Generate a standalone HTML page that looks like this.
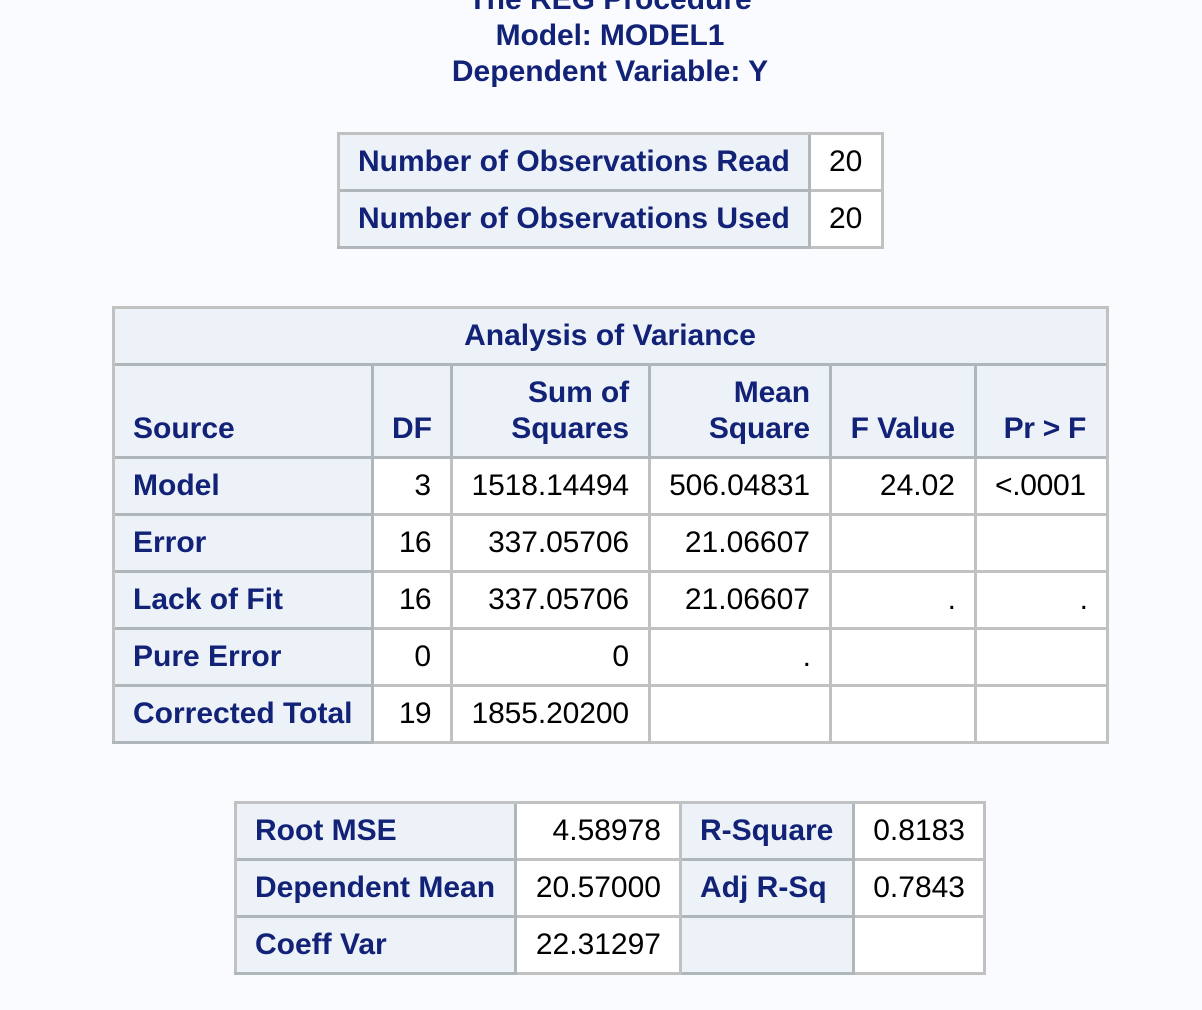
<!DOCTYPE html>
<html><head><meta charset="utf-8"><title>The REG Procedure</title>
<style>
html,body{margin:0;padding:0;width:1202px;height:1010px;overflow:hidden;background:#fafbfe}
body{position:relative;font-family:"Liberation Sans",Arial,sans-serif;font-size:30px;line-height:36px;color:#000}
.t{position:absolute;left:0;width:1220px;text-align:center;font-weight:bold;color:#112277;white-space:nowrap}
.h,.d{position:absolute;box-sizing:border-box;white-space:nowrap;padding:9px 19px 9px 18px}
.h{background:#edf2f9;color:#112277;font-weight:bold}
.d{background:#fff;text-align:right}
.r{text-align:right;letter-spacing:-.1px}.c{text-align:center}
.b{padding-top:45px}
.a,.g{position:absolute}
.a{background:#c1c1c1}
.g{background:#b0b7bb}
.l{padding-right:21px;letter-spacing:-.3px}
.e{padding-right:18px}
.n{letter-spacing:-.1px}
.p{padding-right:18px}
.s{letter-spacing:-.6px}
</style></head><body>
<div class="t" style="top:-18px">The REG Procedure</div>
<div class="t" style="top:18px;letter-spacing:-.1px">Model: MODEL1</div>
<div class="t" style="top:54px">Dependent Variable: Y</div>

<!-- table 1 -->
<div class="h" style="left:340px;top:135px;width:468px;height:54px">Number of Observations Read</div>
<div class="d" style="left:811px;top:135px;width:70px;height:54px">20</div>
<div class="h" style="left:340px;top:192px;width:468px;height:54px">Number of Observations Used</div>
<div class="d" style="left:811px;top:192px;width:70px;height:54px">20</div>
<div class="a" style="left:337px;top:132px;width:547px;height:3px"></div>
<div class="a" style="left:337px;top:132px;width:3px;height:117px"></div>
<div class="a" style="left:881px;top:132px;width:3px;height:117px"></div>
<div class="a" style="left:811px;top:189px;width:70px;height:3px"></div>
<div class="a" style="left:811px;top:246px;width:73px;height:3px"></div>
<div class="g" style="left:340px;top:189px;width:471px;height:3px"></div>
<div class="g" style="left:337px;top:246px;width:474px;height:3px"></div>
<div class="g" style="left:808px;top:135px;width:3px;height:114px"></div>

<!-- table 2 -->
<div class="h c" style="left:115px;top:309px;width:991px;height:54px">Analysis of Variance</div>
<div class="h b" style="left:115px;top:366px;width:256px;height:90px">Source</div>
<div class="h b r" style="left:374px;top:366px;width:76px;height:90px">DF</div>
<div class="h r" style="left:453px;top:366px;width:195px;height:90px">Sum of<br>Squares</div>
<div class="h r" style="left:651px;top:366px;width:178px;height:90px">Mean<br>Square</div>
<div class="h b r" style="left:832px;top:366px;width:142px;height:90px">F Value</div>
<div class="h b r" style="left:977px;top:366px;width:129px;height:90px;padding-right:20px;letter-spacing:-.3px">Pr &gt; F</div>

<div class="h" style="left:115px;top:459px;width:256px;height:54px">Model</div>
<div class="d" style="left:374px;top:459px;width:76px;height:54px">3</div>
<div class="d n" style="left:453px;top:459px;width:195px;height:54px">1518.14494</div>
<div class="d n" style="left:651px;top:459px;width:178px;height:54px">506.04831</div>
<div class="d" style="left:832px;top:459px;width:142px;height:54px">24.02</div>
<div class="d l" style="left:977px;top:459px;width:129px;height:54px">&lt;.0001</div>

<div class="h" style="left:115px;top:516px;width:256px;height:54px">Error</div>
<div class="d s" style="left:374px;top:516px;width:76px;height:54px">16</div>
<div class="d n" style="left:453px;top:516px;width:195px;height:54px">337.05706</div>
<div class="d" style="left:651px;top:516px;width:178px;height:54px">21.06607</div>
<div class="d" style="left:832px;top:516px;width:142px;height:54px"></div>
<div class="d" style="left:977px;top:516px;width:129px;height:54px"></div>

<div class="h" style="left:115px;top:573px;width:256px;height:54px">Lack of Fit</div>
<div class="d s" style="left:374px;top:573px;width:76px;height:54px">16</div>
<div class="d n" style="left:453px;top:573px;width:195px;height:54px">337.05706</div>
<div class="d" style="left:651px;top:573px;width:178px;height:54px">21.06607</div>
<div class="d p" style="left:832px;top:573px;width:142px;height:54px">.</div>
<div class="d p" style="left:977px;top:573px;width:129px;height:54px">.</div>

<div class="h" style="left:115px;top:630px;width:256px;height:54px">Pure Error</div>
<div class="d" style="left:374px;top:630px;width:76px;height:54px">0</div>
<div class="d" style="left:453px;top:630px;width:195px;height:54px">0</div>
<div class="d p" style="left:651px;top:630px;width:178px;height:54px">.</div>
<div class="d" style="left:832px;top:630px;width:142px;height:54px"></div>
<div class="d" style="left:977px;top:630px;width:129px;height:54px"></div>

<div class="h" style="left:115px;top:687px;width:256px;height:54px">Corrected Total</div>
<div class="d s" style="left:374px;top:687px;width:76px;height:54px">19</div>
<div class="d n" style="left:453px;top:687px;width:195px;height:54px">1855.20200</div>
<div class="d" style="left:651px;top:687px;width:178px;height:54px"></div>
<div class="d" style="left:832px;top:687px;width:142px;height:54px"></div>
<div class="d" style="left:977px;top:687px;width:129px;height:54px"></div>

<div class="a" style="left:112px;top:306px;width:997px;height:3px"></div>
<div class="a" style="left:112px;top:306px;width:3px;height:438px"></div>
<div class="a" style="left:1106px;top:306px;width:3px;height:438px"></div>
<div class="a" style="left:374px;top:513px;width:732px;height:3px"></div>
<div class="a" style="left:374px;top:570px;width:732px;height:3px"></div>
<div class="a" style="left:374px;top:627px;width:732px;height:3px"></div>
<div class="a" style="left:374px;top:684px;width:732px;height:3px"></div>
<div class="a" style="left:374px;top:741px;width:735px;height:3px"></div>
<div class="a" style="left:450px;top:459px;width:3px;height:282px"></div>
<div class="a" style="left:648px;top:459px;width:3px;height:282px"></div>
<div class="a" style="left:829px;top:459px;width:3px;height:282px"></div>
<div class="a" style="left:974px;top:459px;width:3px;height:282px"></div>
<div class="g" style="left:115px;top:363px;width:991px;height:3px"></div>
<div class="g" style="left:115px;top:456px;width:991px;height:3px"></div>
<div class="g" style="left:371px;top:366px;width:3px;height:378px"></div>
<div class="g" style="left:450px;top:366px;width:3px;height:90px"></div>
<div class="g" style="left:648px;top:366px;width:3px;height:90px"></div>
<div class="g" style="left:829px;top:366px;width:3px;height:90px"></div>
<div class="g" style="left:974px;top:366px;width:3px;height:90px"></div>
<div class="g" style="left:115px;top:513px;width:256px;height:3px"></div>
<div class="g" style="left:115px;top:570px;width:256px;height:3px"></div>
<div class="g" style="left:115px;top:627px;width:256px;height:3px"></div>
<div class="g" style="left:115px;top:684px;width:256px;height:3px"></div>
<div class="g" style="left:112px;top:741px;width:262px;height:3px"></div>

<!-- table 3 -->
<div class="h" style="left:237px;top:804px;width:277px;height:54px">Root MSE</div>
<div class="d e" style="left:517px;top:804px;width:162px;height:54px">4.58978</div>
<div class="h" style="left:682px;top:804px;width:170px;height:54px">R-Square</div>
<div class="d e" style="left:855px;top:804px;width:128px;height:54px">0.8183</div>
<div class="h" style="left:237px;top:861px;width:277px;height:54px">Dependent Mean</div>
<div class="d e" style="left:517px;top:861px;width:162px;height:54px">20.57000</div>
<div class="h" style="left:682px;top:861px;width:170px;height:54px">Adj R-Sq</div>
<div class="d e" style="left:855px;top:861px;width:128px;height:54px">0.7843</div>
<div class="h" style="left:237px;top:918px;width:277px;height:54px">Coeff Var</div>
<div class="d e" style="left:517px;top:918px;width:162px;height:54px">22.31297</div>
<div class="h" style="left:682px;top:918px;width:170px;height:54px"></div>
<div class="d" style="left:855px;top:918px;width:128px;height:54px"></div>

<div class="a" style="left:234px;top:801px;width:752px;height:3px"></div>
<div class="a" style="left:234px;top:801px;width:3px;height:174px"></div>
<div class="a" style="left:983px;top:801px;width:3px;height:174px"></div>
<div class="a" style="left:517px;top:858px;width:466px;height:3px"></div>
<div class="a" style="left:517px;top:915px;width:466px;height:3px"></div>
<div class="a" style="left:517px;top:972px;width:469px;height:3px"></div>
<div class="a" style="left:679px;top:804px;width:3px;height:171px"></div>
<div class="g" style="left:237px;top:858px;width:277px;height:3px"></div>
<div class="g" style="left:237px;top:915px;width:277px;height:3px"></div>
<div class="g" style="left:234px;top:972px;width:283px;height:3px"></div>
<div class="g" style="left:514px;top:804px;width:3px;height:171px"></div>
<div class="g" style="left:682px;top:858px;width:170px;height:3px"></div>
<div class="g" style="left:682px;top:915px;width:170px;height:3px"></div>
<div class="g" style="left:682px;top:972px;width:173px;height:3px"></div>
<div class="g" style="left:852px;top:804px;width:3px;height:171px"></div>
</body></html>
